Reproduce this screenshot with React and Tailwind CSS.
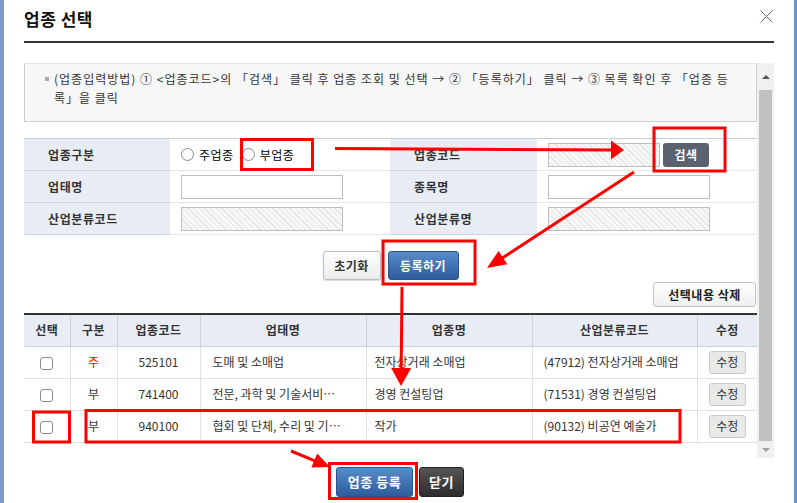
import React from 'react'

const font = "font-['Noto_Sans_CJK_KR','Noto_Sans',sans-serif]"
const hatch =
  'bg-[repeating-linear-gradient(45deg,#f7f7f7_0px,#f7f7f7_3px,#e4e4e4_3px,#e4e4e4_4px)]'

function Arrow({ x1, y1, x2, y2, len = 18, width = 16 }) {
  const dx = x2 - x1
  const dy = y2 - y1
  const d = Math.hypot(dx, dy)
  const ux = dx / d
  const uy = dy / d
  const bx = x2 - ux * len
  const by = y2 - uy * len
  const px = -uy * (width / 2)
  const py = ux * (width / 2)
  const pts = `${x2},${y2} ${bx + px},${by + py} ${bx - px},${by - py}`
  return (
    <g>
      <line x1={x1} y1={y1} x2={bx + ux * 2} y2={by + uy * 2} stroke="#ff0000" strokeWidth="3" />
      <polygon points={pts} fill="#ff0000" />
    </g>
  )
}

function Overlay() {
  const boxes = [
    [241.5, 139.5, 71, 30],
    [654, 128, 71, 43],
    [383, 241, 92, 43],
    [33.5, 412, 36, 30],
    [86, 410.5, 594, 31.5],
    [329.5, 463.5, 87, 35],
  ]
  return (
    <svg className="absolute inset-0 pointer-events-none" width="797" height="503">
      {boxes.map(([x, y, w, h], i) => (
        <rect key={i} x={x} y={y} width={w} height={h} fill="none" stroke="#ff0000" strokeWidth="3" />
      ))}
      <Arrow x1={335} y1={148.5} x2={624} y2={150} len={13} width={19} />
      <Arrow x1={634} y1={172} x2={487} y2={268} len={19} width={16} />
      <Arrow x1={402} y1={287} x2={401} y2={386} len={18} width={20} />
      <Arrow x1={291} y1={451} x2={330} y2={467} len={17} width={15} />
    </svg>
  )
}

function Radio({ label }) {
  return (
    <label className="flex items-center gap-[5px]">
      <span className="w-[13px] h-[13px] rounded-full border border-[#8a8a8a] bg-white" />
      <span className="tracking-[0.5px]">{label}</span>
    </label>
  )
}

function Check() {
  return <span className="inline-block w-[13px] h-[13px] rounded-[3px] border border-[#8a8a8a] bg-white align-middle" />
}

function FormTable() {
  const label = 'bg-[#e8edf5] pl-[24px] font-bold text-[#333] tracking-[0.6px] flex items-center border-b border-[#cad2de]'
  const value = 'pl-[11px] flex items-center border-b border-[#e6e6e6]'
  return (
    <div className="grid grid-cols-[146px_220px_147px_220px] grid-rows-[32px_32px_32px] border-t border-[#c5cfdc] text-[12px]">
      <div className={label}>업종구분</div>
      <div className={`${value} gap-[8px]`}>
        <Radio label="주업종" />
        <Radio label="부업종" />
      </div>
      <div className={label}>업종코드</div>
      <div className={`${value} gap-[3px]`}>
        <div className={`w-[112px] h-[24px] border border-[#bdbdbd] ${hatch}`} />
        <button className="h-[24px] w-[46px] rounded-[3px] bg-[#5a6270] text-white font-bold tracking-[0.5px]">검색</button>
      </div>

      <div className={label}>업태명</div>
      <div className={value}>
        <div className="w-[162px] h-[24px] border border-[#bdbdbd] bg-white" />
      </div>
      <div className={label}>종목명</div>
      <div className={value}>
        <div className="w-[162px] h-[24px] border border-[#bdbdbd] bg-white" />
      </div>

      <div className={`${label} border-[#c5cfdc]`}>산업분류코드</div>
      <div className={`${value} border-[#c5cfdc]`}>
        <div className={`w-[162px] h-[24px] border border-[#bdbdbd] ${hatch}`} />
      </div>
      <div className={`${label} border-[#c5cfdc]`}>산업분류명</div>
      <div className={`${value} border-[#c5cfdc]`}>
        <div className={`w-[162px] h-[24px] border border-[#bdbdbd] ${hatch}`} />
      </div>
    </div>
  )
}

const rows = [
  { kind: '주', red: true, code: '525101', biz: '도매 및 소매업', item: '전자상거래 소매업', ind: '(47912) 전자상거래 소매업' },
  { kind: '부', code: '741400', biz: '전문, 과학 및 기술서비…', item: '경영 컨설팅업', ind: '(71531) 경영 컨설팅업' },
  { kind: '부', code: '940100', biz: '협회 및 단체, 수리 및 기…', item: '작가', ind: '(90132) 비공연 예술가' },
]

function ListTable() {
  const th = 'h-[32px] font-bold text-[#333] tracking-[0.5px] border-r border-[#cad2de] last:border-r-0 text-center'
  const td = 'h-[32px] border-r border-b border-[#dde1e6] last:border-r-0'
  return (
    <table className="w-[733px] table-fixed border-collapse border-t-2 border-[#333] text-[12px] text-[#333]">
      <colgroup>
        <col className="w-[46px]" />
        <col className="w-[47px]" />
        <col className="w-[83px]" />
        <col className="w-[166px]" />
        <col className="w-[166px]" />
        <col className="w-[165px]" />
        <col className="w-[60px]" />
      </colgroup>
      <thead>
        <tr className="bg-[#e8edf5] border-b border-[#cad2de]">
          <th className={th}>선택</th>
          <th className={th}>구분</th>
          <th className={th}>업종코드</th>
          <th className={th}>업태명</th>
          <th className={th}>업종명</th>
          <th className={th}>산업분류코드</th>
          <th className={th}>수정</th>
        </tr>
      </thead>
      <tbody>
        {rows.map((r, i) => (
          <tr key={i}>
            <td className={`${td} text-center`}>
              <Check />
            </td>
            <td className={`${td} text-center ${r.red ? 'text-[#ff0000]' : ''}`}>{r.kind}</td>
            <td className={`${td} text-center`}>{r.code}</td>
            <td className={`${td} pl-[12px] whitespace-nowrap overflow-hidden`}>{r.biz}</td>
            <td className={`${td} pl-[8px] whitespace-nowrap`}>{r.item}</td>
            <td className={`${td} pl-[11px] whitespace-nowrap`}>{r.ind}</td>
            <td className={`${td} text-center`}>
              <button className="w-[37px] h-[23px] rounded-[3px] border border-[#c9c9c9] bg-[#e9e9e9] text-[#333]">수정</button>
            </td>
          </tr>
        ))}
      </tbody>
    </table>
  )
}

function Scrollbar() {
  return (
    <div className="w-[17px] h-full bg-[#f0f0f0] flex flex-col items-center">
      <div className="h-[27px] flex items-center justify-center">
        <span className="w-0 h-0 border-l-[4px] border-r-[4px] border-b-[4px] border-l-transparent border-r-transparent border-b-[#555]" />
      </div>
      <div className="w-[13px] h-[351px] bg-[#c1c1c1]" />
      <div className="flex-1 flex items-center justify-center">
        <span className="w-0 h-0 border-l-[4px] border-r-[4px] border-t-[4px] border-l-transparent border-r-transparent border-t-[#a0a0a0]" />
      </div>
    </div>
  )
}

export default function App() {
  return (
    <div className={`relative w-[797px] h-[503px] overflow-hidden bg-white flex ${font}`}>
      <div className="w-[4px] h-full bg-[#7b9bc6]" />
      <div className="w-[770px] pl-[20px] flex flex-col">
        <div className="h-[41px] flex items-start justify-between">
          <h1 className="mt-[6px] text-[17px] font-bold text-[#111] tracking-[0.5px]">업종 선택</h1>
          <svg className="mt-[10px] mr-[1px]" width="13" height="13" viewBox="0 0 13 13">
            <path d="M0.5 0.5 L12.5 12.5 M12.5 0.5 L0.5 12.5" stroke="#5e6b8c" strokeWidth="1" fill="none" />
          </svg>
        </div>
        <div className="h-[2px] bg-[#333]" />
        <div className="mt-[20px] h-[395px] flex">
          <div className="w-[733px] flex flex-col overflow-hidden">
            <div className="h-[59px] shrink-0 bg-[#f7f7f7] border border-[#cccccc] border-t-[#e4e4e4] pl-[20px] pt-[5px] text-[12px] leading-[19px] text-[#333] tracking-[1px]">
              <div className="whitespace-nowrap flex items-center">
                <span className="inline-block w-[4px] h-[4px] bg-[#aaa] mr-[5px]" />
                (업종입력방법) ① &lt;업종코드&gt;의 「검색」 클릭 후 업종 조회 및 선택 → ② 「등록하기」 클릭 → ③ 목록 확인 후 「업종 등
              </div>
              <div className="pl-[9px] whitespace-nowrap">록」을 클릭</div>
            </div>
            <div className="mt-[16px]">
              <FormTable />
            </div>
            <div className="mt-[16px] flex justify-center gap-[7px] text-[12px] font-bold tracking-[0.5px]">
              <button className="h-[29px] w-[58px] rounded-[3px] border border-[#bdbdbd] bg-gradient-to-b from-white to-[#ececec] text-[#333] shadow-[0_1px_1px_rgba(0,0,0,0.15)]">
                초기화
              </button>
              <button className="h-[29px] w-[71px] rounded-[3px] border border-[#2b5591] bg-gradient-to-b from-[#5a8bcb] to-[#2c5c9c] text-white">
                등록하기
              </button>
            </div>
            <div className="mt-[2px] flex justify-end pr-[1px]">
              <button className="h-[25px] w-[103px] rounded-[3px] border border-[#c3c3c3] bg-gradient-to-b from-white to-[#f0f0f0] text-[12px] font-bold text-[#222] tracking-[0.5px]">
                선택내용 삭제
              </button>
            </div>
            <div className="mt-[6px]">
              <ListTable />
            </div>
          </div>
          <Scrollbar />
        </div>
        <div className="mt-[9px] flex justify-center gap-[6px] text-[13px] font-bold text-white pl-[2px] tracking-[0.5px]">
          <button className="h-[30px] w-[77px] rounded-[3px] border border-[#2b5591] bg-gradient-to-b from-[#5a8bcb] to-[#2c5c9c]">
            업종 등록
          </button>
          <button className="h-[30px] w-[45px] rounded-[3px] border border-[#222] bg-gradient-to-b from-[#555] to-[#2e2e2e]">
            닫기
          </button>
        </div>
      </div>
      <div className="flex-1" />
      <div className="w-[3px] h-full bg-[#6b96c9]" />
      <Overlay />
    </div>
  )
}
